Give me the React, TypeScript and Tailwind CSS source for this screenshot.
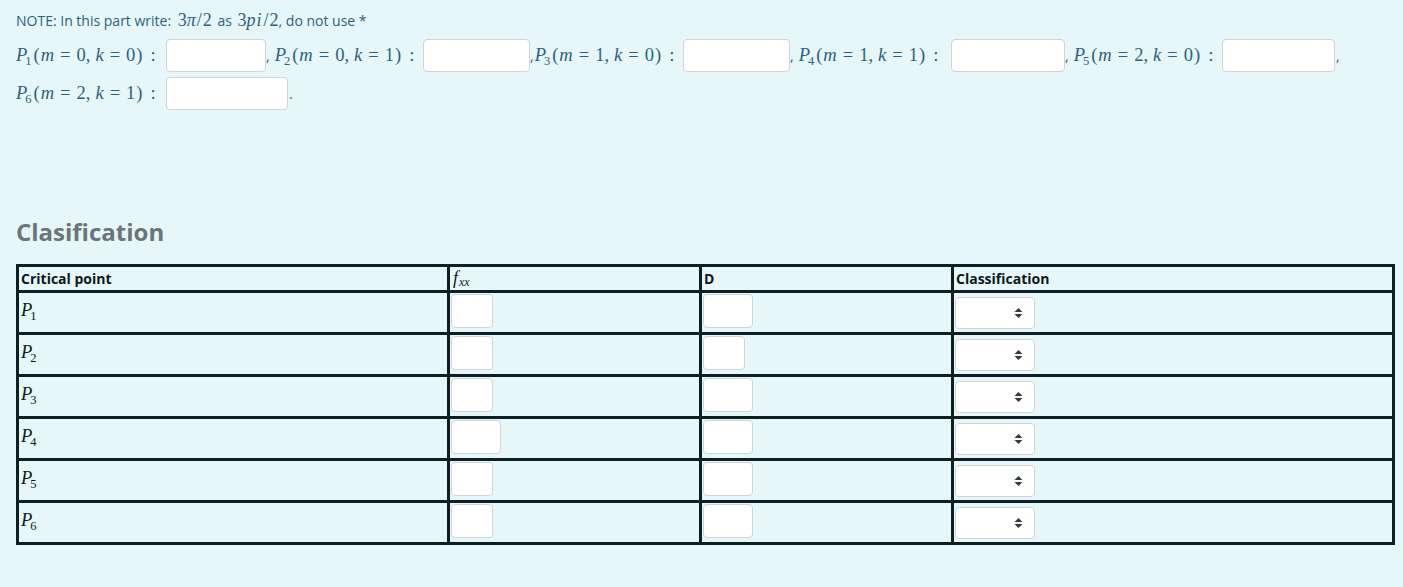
import React from "react";

const SANS = "font-['Open_Sans','Noto_Sans',sans-serif]";
const SERIF = "font-['Liberation_Serif','DejaVu_Serif',serif]";

function Sub({ c }: { c: string }) {
  return <span className="relative top-[4px] -ml-[2px] mr-[2px] text-[12.5px] not-italic">{c}</span>;
}

function Eq() {
  return <span className="mx-[6px]">=</span>;
}

function Label({ n, m, k }: { n: string; m: string; k: string }) {
  return (
    <span className={`${SERIF} text-[18.5px] whitespace-nowrap`}>
      <i>P</i>
      <Sub c={n} />
      <span className="mr-[1px]">(</span>
      <i>m</i>
      <Eq />
      {m},<span className="inline-block w-[5px]" />
      <i>k</i>
      <Eq />
      {k}
      <span className="ml-[1px]">)</span>
      <span className="ml-[8px]">:</span>
    </span>
  );
}

function Box({ w }: { w: string }) {
  return <div className={`${w} h-[33px] shrink-0 bg-white border border-[#ced4da] rounded-[4px]`} />;
}

function Comma({ gap }: { gap: string }) {
  return <span className={`${SANS} text-[14px] ${gap}`}>,</span>;
}

function SelectBox() {
  return (
    <div className="w-[80px] h-[32px] bg-white border border-[#ced4da] rounded-[4px] flex items-center justify-end pr-[11px]">
      <svg width="9" height="12" viewBox="0 0 9 12">
        <path d="M0.5 5 L4.5 1 L8.5 5 Z" fill="#343a40" />
        <path d="M0.5 7 L4.5 11 L8.5 7 Z" fill="#343a40" />
      </svg>
    </div>
  );
}

function PCell({ n }: { n: string }) {
  return (
    <span className={`${SERIF} text-[18.5px] text-[#0b1a20]`}>
      <i>P</i>
      <Sub c={n} />
    </span>
  );
}

const rows = [
  { n: "1", f: "w-[42px]", d: "w-[50px]" },
  { n: "2", f: "w-[42px]", d: "w-[42px]" },
  { n: "3", f: "w-[42px]", d: "w-[50px]" },
  { n: "4", f: "w-[50px]", d: "w-[50px]" },
  { n: "5", f: "w-[42px]", d: "w-[50px]" },
  { n: "6", f: "w-[42px]", d: "w-[50px]" },
];

export default function App() {
  const cell = "bg-[#e7f6f8]";
  return (
    <div className={`min-h-[587px] w-full bg-[#e7f6f8] ${SANS} pt-[10px]`}>
      <div className="pl-[16px] text-[#2a6284]">
        <div className="text-[14px] leading-[21px] h-[21px] whitespace-nowrap">
          NOTE: In this part write:{" "}
          <span className={`${SERIF} text-[18px] ml-[3px] mr-[2px]`}>
            3<i>π</i>
            <span className="mx-[1px]">/</span>2
          </span>{" "}
          as{" "}
          <span className={`${SERIF} text-[18px] ml-[2px]`}>
            3<i className="tracking-[1px]">pi</i>
            <span className="mx-[1px]">/</span>2
          </span>
          , do not use *
        </div>
        <div className="mt-[8px] flex items-center h-[33px]">
          <div className="w-[150px] shrink-0">
            <Label n="1" m="0" k="0" />
          </div>
          <Box w="w-[100px]" />
          <div className="w-[157px] shrink-0 flex items-center">
            <Comma gap="mr-[5px]" />
            <Label n="2" m="0" k="1" />
          </div>
          <Box w="w-[107px]" />
          <div className="w-[153px] shrink-0 flex items-center">
            <Comma gap="mr-[1px]" />
            <Label n="3" m="1" k="0" />
          </div>
          <Box w="w-[107px]" />
          <div className="w-[161px] shrink-0 flex items-center">
            <Comma gap="mr-[5px]" />
            <Label n="4" m="1" k="1" />
          </div>
          <Box w="w-[114px]" />
          <div className="w-[157px] shrink-0 flex items-center">
            <Comma gap="mr-[5px]" />
            <Label n="5" m="2" k="0" />
          </div>
          <Box w="w-[113px]" />
          <Comma gap="ml-[1px]" />
        </div>
        <div className="mt-[5px] flex items-center h-[33px]">
          <div className="w-[150px] shrink-0">
            <Label n="6" m="2" k="1" />
          </div>
          <Box w="w-[122px]" />
          <span className="text-[14px] ml-[1px]">.</span>
        </div>
      </div>

      <h2 className="pl-[16px] mt-[104px] text-[24px] leading-[36px] font-bold text-[#6b747b]">Clasification</h2>

      <div className="ml-[16px] mt-[14px] w-[1379px] grid grid-cols-[428px_249px_249px_438px] grid-rows-[23px_repeat(6,39px)] gap-[3px] p-[3px] bg-[#0b1f25] text-[#0b1a20]">
        <div className={`${cell} pl-[2px] text-[14px] font-bold leading-[23px]`}>Critical point</div>
        <div className={`${cell} pl-[3px] leading-[23px]`}>
          <span className={`${SERIF} text-[18px]`}>
            <i>f</i>
            <span className="relative top-[2px] text-[12px] italic ml-[1px]">xx</span>
          </span>
        </div>
        <div className={`${cell} pl-[2px] text-[14px] font-bold leading-[23px]`}>D</div>
        <div className={`${cell} pl-[2px] text-[14px] font-bold leading-[23px]`}>Classification</div>
        {rows.map((r) => (
          <React.Fragment key={r.n}>
            <div className={`${cell} pl-[2px] flex items-center pb-[3px]`}>
              <PCell n={r.n} />
            </div>
            <div className={`${cell} pl-[1px] pt-[1px]`}>
              <div className={`${r.f} h-[34px] bg-white border border-[#ced4da] rounded-[4px]`} />
            </div>
            <div className={`${cell} pl-[1px] pt-[1px]`}>
              <div className={`${r.d} h-[34px] bg-white border border-[#ced4da] rounded-[4px]`} />
            </div>
            <div className={`${cell} pl-[1px] flex items-center`}>
              <SelectBox />
            </div>
          </React.Fragment>
        ))}
      </div>
    </div>
  );
}
